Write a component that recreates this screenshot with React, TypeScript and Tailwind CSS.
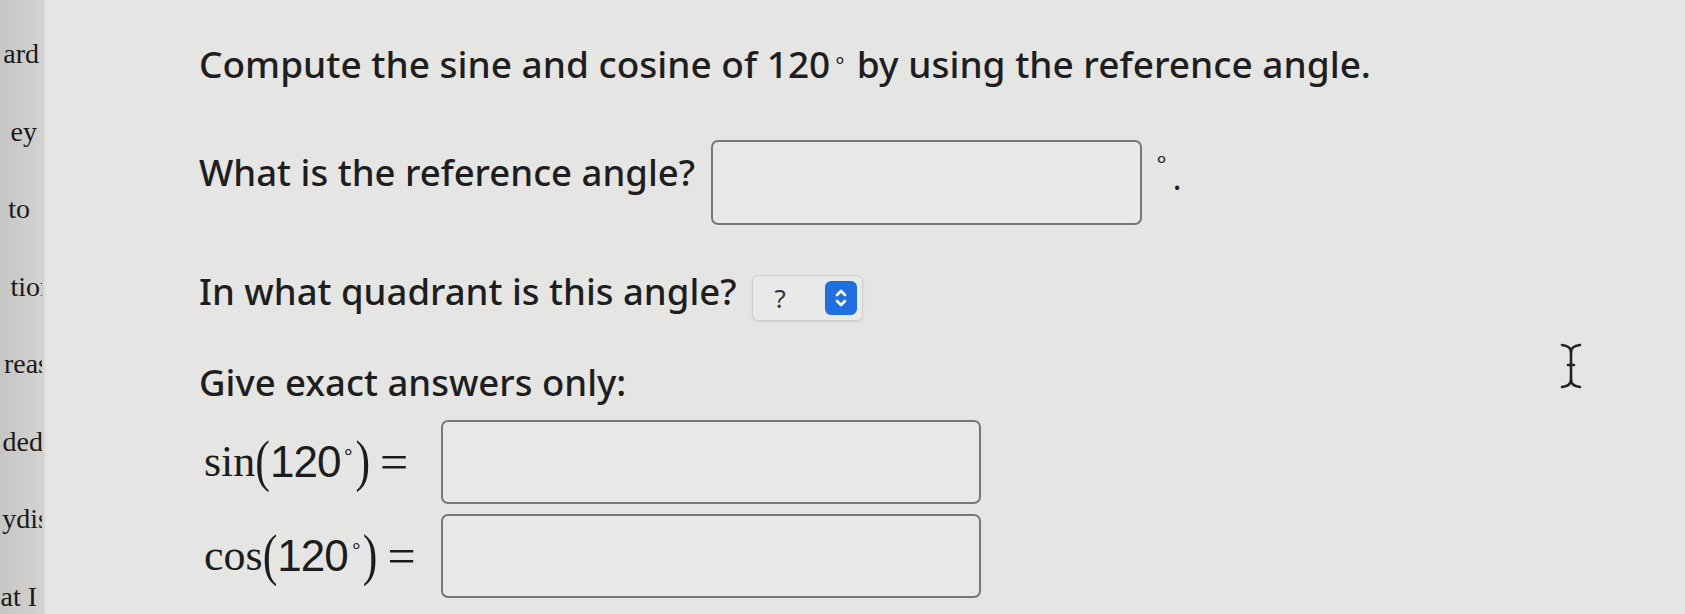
import * as React from 'react'

const sideWords = [
  { text: 'ard', shift: 'mr-[3px]' },
  { text: 'ey', shift: 'mr-[5px]' },
  { text: 'to', shift: 'mr-[12px]' },
  { text: 'tion', shift: 'mr-[-12px]' },
  { text: 'reas', shift: 'mr-[-7px]' },
  { text: 'ded', shift: 'mr-[-1px]' },
  { text: 'ydis', shift: 'mr-[-7px]' },
  { text: 'at I', shift: 'mr-[5px]' },
]

function AnswerBox({ className = '' }: { className?: string }) {
  return <div className={`rounded-[7px] border-2 border-[#777775] bg-[#e8e8e6] ${className}`} />
}

function MathLabel({ fn }: { fn: string }) {
  return (
    <div className="flex w-[242px] shrink-0 items-center pl-[5px] text-[44px] font-normal text-[#1c1c1c]">
      <span className="font-['Liberation_Serif',serif]">{fn}</span>
      <span className="inline-block scale-y-[1.3] font-['Liberation_Serif',serif]">(</span>
      <span className="font-['Liberation_Sans',sans-serif] tracking-[-1px]">120</span>
      <span className="mb-5 ml-0.5 text-[20px] font-['Liberation_Serif',serif]">∘</span>
      <span className="inline-block scale-y-[1.3] font-['Liberation_Serif',serif]">)</span>
      <span className="ml-[10px] font-['Liberation_Serif',serif] text-[50px] leading-none">=</span>
    </div>
  )
}

export default function App() {
  return (
    <div className="relative flex h-[614px] w-[1685px] overflow-hidden bg-[#e5e5e3] font-['Noto_Sans',sans-serif] font-medium text-[#1e1e1e]">
      <div className="flex w-[42px] shrink-0 flex-col items-end overflow-hidden bg-gradient-to-r from-[#c6c6c4] to-[#d2d2d0] pt-[34px] shadow-[2px_0_3px_rgba(0,0,0,0.12)]">
        {sideWords.map((w) => (
          <div
            key={w.text}
            className={`h-[77.5px] shrink-0 whitespace-nowrap font-['Liberation_Serif',serif] text-[28px] font-normal leading-[40px] text-[#1a1a1a] ${w.shift}`}
          >
            {w.text}
          </div>
        ))}
      </div>

      <div className="flex flex-1 flex-col pl-[157px] pt-[38px]">
        <h1 className="text-[37px] leading-[52px]">
          Compute the sine and cosine of 120<sup className="ml-[3px] text-[22px]">∘</sup> by using the reference angle.
        </h1>

        <div className="mt-[50px] flex items-start">
          <span className="mt-[6px] text-[36.5px] leading-[52px]">What is the reference angle?</span>
          <AnswerBox className="ml-[16px] h-[85px] w-[431px]" />
          <span className="ml-[12px] mt-[6px] text-[24px] font-normal leading-none">∘</span>
          <span className="ml-[4px] mt-[24px] text-[30px] leading-none">.</span>
        </div>

        <div className="mt-[40px] flex items-start">
          <span className="text-[36.5px] leading-[52px]">In what quadrant is this angle?</span>
          <div className="ml-[15px] mt-[10px] flex h-[46px] w-[111px] items-center justify-between rounded-[6px] border border-[#d0d0ce] bg-[#e9e9e7] pl-[22px] pr-[5px] shadow-[0_1px_2px_rgba(0,0,0,0.1)]">
            <span className="text-[26px] font-normal leading-none text-[#333]">?</span>
            <div className="flex h-[34px] w-[32px] items-center justify-center rounded-[6px] bg-[#1f6fe2]">
              <svg width="14" height="22" viewBox="0 0 14 22" fill="none" stroke="white" strokeWidth="2.6" strokeLinecap="round" strokeLinejoin="round">
                <path d="M3 8 L7 4 L11 8" />
                <path d="M3 14 L7 18 L11 14" />
              </svg>
            </div>
          </div>
        </div>

        <div className="mt-[35px] text-[36.5px] leading-[52px]">Give exact answers only:</div>

        <div className="mt-[12px] flex items-center">
          <MathLabel fn="sin" />
          <AnswerBox className="h-[84px] w-[540px]" />
        </div>
        <div className="mt-[10px] flex items-center">
          <MathLabel fn="cos" />
          <AnswerBox className="h-[84px] w-[540px]" />
        </div>
      </div>

      <svg className="absolute left-[1560px] top-[343px]" width="22" height="46" viewBox="0 0 22 46" fill="none" stroke="#222" strokeWidth="2.6" strokeLinecap="round">
        <path d="M2 2 Q11 3 11 9 L11 37 Q11 43 2 44" />
        <path d="M20 2 Q11 3 11 9 M11 37 Q11 43 20 44" />
        <path d="M8 22 L14 22" />
      </svg>
    </div>
  )
}
